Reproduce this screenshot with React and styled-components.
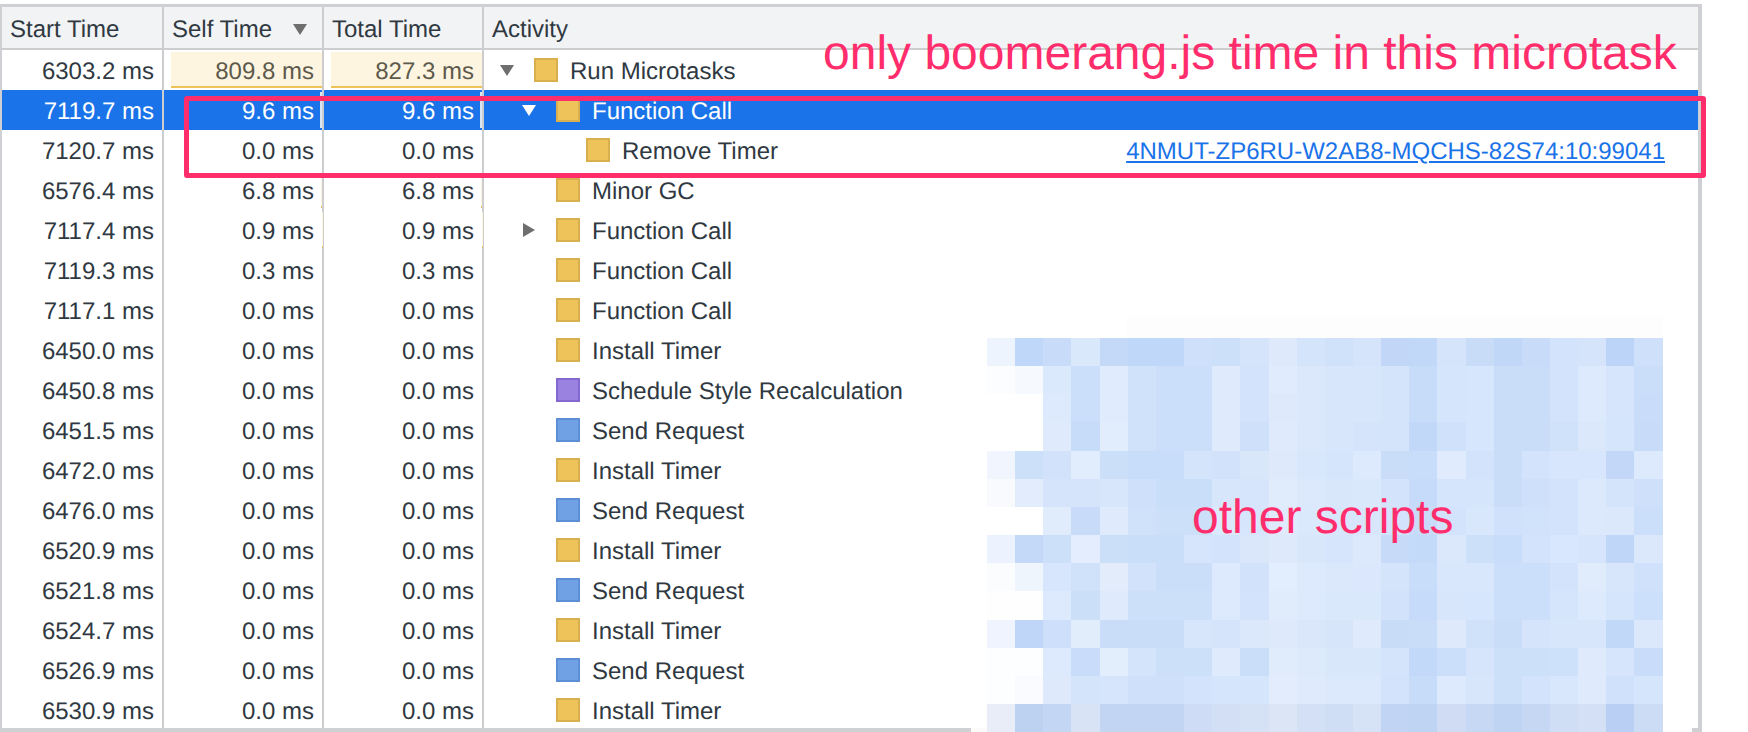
import React from "react";
import styled, { createGlobalStyle } from "styled-components";

const Global = createGlobalStyle`
  html, body { margin: 0; padding: 0; background: #fff; overflow: hidden; }
  #root { width: 1748px; height: 732px; }
  * { box-sizing: border-box; }
`;

const Page = styled.div`
  position: relative;
  width: 1748px;
  height: 732px;
  padding-top: 4px;
  font-family: "Liberation Sans", Arial, sans-serif;
  text-rendering: geometricPrecision;
  overflow: hidden;
`;

const Panel = styled.div`
  width: 1702px;
  height: 728px;
  border: solid #cfd0d3;
  border-width: 3px 4px 4px 2px;
  overflow: hidden;
  background: #fff;
`;

const HeaderRow = styled.div`
  display: grid;
  grid-template-columns: 162px 160px 160px 1fr;
  height: 43px;
  background: #f1f3f4;
  border-bottom: 2px solid #cdcdd0;
  color: #303942;
  font-size: 24px;
`;

const HeaderCell = styled.div`
  display: flex;
  align-items: center;
  padding: 4px 0 0 8px;
  border-right: ${(p) => (p.$last ? "none" : "2px solid #cdcdd0")};
`;

const SortArrow = styled.span`
  width: 0;
  height: 0;
  margin-left: 21px;
  border-left: 7.5px solid transparent;
  border-right: 7.5px solid transparent;
  border-top: 11px solid #6e6e6e;
`;

const TableRow = styled.div`
  display: grid;
  grid-template-columns: 162px 160px 160px 1fr;
  height: 40px;
  font-size: 24px;
  color: ${(p) => (p.$selected ? "#fff" : "#303942")};
  background: ${(p) => (p.$selected ? "#1a73e8" : "#fff")};
`;

const TimeCell = styled.div`
  position: relative;
  display: flex;
  align-items: center;
  justify-content: flex-end;
  padding-right: 8px;
  border-right: 2px solid #cdcdd0;
`;

const TimeText = styled.span`
  position: relative;
  padding-top: 4px;
  color: ${(p) => (p.$dim ? "#5d5a4c" : "inherit")};
`;

const Bar = styled.span`
  position: absolute;
  top: 2px;
  right: 0;
  height: 36px;
  background: ${(p) => (p.$selected ? "#dbe6f5" : "#fdf5e0")};
  border-bottom: 2px solid ${(p) => (p.$selected ? "#dbe6f5" : "#f0c35a")};
`;

const ActivityCell = styled.div`
  display: flex;
  align-items: center;
  min-width: 0;
  padding-left: ${(p) => p.$indent}px;
  padding-right: 33px;
`;

const Twisty = styled.span`
  flex: none;
  display: flex;
  align-items: center;
  justify-content: center;
  width: 15px;
  margin-right: 20px;
  height: 15px;
`;

const TriangleDown = styled.span`
  width: 0;
  height: 0;
  border-left: 7.5px solid transparent;
  border-right: 7.5px solid transparent;
  border-top: 11px solid ${(p) => (p.$selected ? "#fff" : "#6e6e6e")};
`;

const TriangleRight = styled.span`
  width: 0;
  height: 0;
  border-top: 7.5px solid transparent;
  border-bottom: 7.5px solid transparent;
  border-left: 12px solid #6e6e6e;
`;

const Swatch = styled.span`
  flex: none;
  width: 24px;
  height: 24px;
  margin-right: 12px;
  background: ${(p) => p.$fill};
  border: 2px solid ${(p) => p.$edge};
`;

const Name = styled.span`
  padding-top: 4px;
  white-space: nowrap;
`;

const SourceLink = styled.a`
  margin-left: auto;
  padding-top: 4px;
  color: #1a73e8;
  text-decoration: underline;
  white-space: nowrap;
`;

const Note = styled.div`
  position: absolute;
  left: ${(p) => p.$x}px;
  top: ${(p) => p.$y}px;
  color: #ff2d6b;
  font-size: 48px;
  line-height: 56px;
  white-space: nowrap;
`;

const Highlight = styled.div`
  position: absolute;
  left: 184px;
  top: 96px;
  width: 1522px;
  height: 82px;
  border: 5px solid #ff2d6b;
  border-radius: 3px;
`;

const Blur = styled.svg`
  position: absolute;
  left: 971px;
  top: 316px;
  display: block;
`;

const KINDS = {
  y: ["#eec45a", "#d9b04f"],
  p: ["#9a82e0", "#8468d0"],
  b: ["#6fa1e4", "#5d8fd6"],
};

const rows = [
  ["6303.2", "809.8", "827.3", 0, "d", "y", "Run Microtasks"],
  ["7119.7", "9.6", "9.6", 1, "d", "y", "Function Call"],
  ["7120.7", "0.0", "0.0", 2, "", "y", "Remove Timer"],
  ["6576.4", "6.8", "6.8", 1, "", "y", "Minor GC"],
  ["7117.4", "0.9", "0.9", 1, "r", "y", "Function Call"],
  ["7119.3", "0.3", "0.3", 1, "", "y", "Function Call"],
  ["7117.1", "0.0", "0.0", 1, "", "y", "Function Call"],
  ["6450.0", "0.0", "0.0", 1, "", "y", "Install Timer"],
  ["6450.8", "0.0", "0.0", 1, "", "p", "Schedule Style Recalculation"],
  ["6451.5", "0.0", "0.0", 1, "", "b", "Send Request"],
  ["6472.0", "0.0", "0.0", 1, "", "y", "Install Timer"],
  ["6476.0", "0.0", "0.0", 1, "", "b", "Send Request"],
  ["6520.9", "0.0", "0.0", 1, "", "y", "Install Timer"],
  ["6521.8", "0.0", "0.0", 1, "", "b", "Send Request"],
  ["6524.7", "0.0", "0.0", 1, "", "y", "Install Timer"],
  ["6526.9", "0.0", "0.0", 1, "", "b", "Send Request"],
  ["6530.9", "0.0", "0.0", 1, "", "y", "Install Timer"],
];

const INDENT = [15, 37, 67];
const SELF_MAX = 809.8;
const TOTAL_MAX = 827.3;
const BAR_FULL = 151.5;

const mosaic = [
  "eef4fe bfd7f8 c8dcf9 dae8fc c4d9f8 bfd7f8 bfd7f8 cfe1fa cde0fa d5e4fb deeafc d4e4fb d0e2fa d5e4fb c2d6f7 c2d8f8 d5e4fb c8dcf8 c0d7f8 c8dcf9 d2e3fb d5e4fb bcd4f8 cfe0fb",
  "fcfdff f6f9fe dbe9fc cbdffa e0ecfd d0e2fa cbdffa cbdffa dfebfd d2e3fb e0ecfd dbe8fc d8e6fc d8e6fc d3e4fb c6dcf9 d5e5fc d6e6fc c9ddf9 c9ddf9 d2e3fb dde9fc d6e5fb cadefa",
  "ffffff ffffff dde9fc cbdffa e0ecfd d0e2fa cbdffa cbdffa dfebfd d2e3fb deeafc dbe8fc d8e6fc d8e6fc d3e4fb c6dcf9 d5e5fc d6e6fc c9ddf9 c9ddf9 d2e3fb dde9fc d6e5fb c9ddfa",
  "ffffff ffffff dfebfd c7dcf9 e1edfd d0e2fa cbdffa cbdffa dfebfd cfe1fa dfebfc dbe8fc d8e6fc d5e4fb d3e4fb c1d8f8 d0e2fb d6e6fc c9ddf9 c9ddf9 d0e1fa dbe8fc d5e5fb c8dcfa",
  "f1f5fe cce0fa d2e2fb e1ecfd cbdff9 c8ddf9 c8ddf9 d4e4fb d1e2fa d9e7fb deeafc d9e7fc d5e5fb dde9fc c9dcf8 c8ddf9 e0ebfd d2e3fb c9ddf9 d2e3fb d7e6fc d7e6fc c3d8f8 dde9fc",
  "f8fafe e2ecfc d5e4fb d5e4fb d8e6fb cfe1fa c9def9 c9def9 d8e6fc d6e5fb e0ebfc dce9fc d9e7fb dae8fc d3e3fb c5dbf9 d5e5fb d5e5fb c9ddf9 cfe1fa d3e3fb dce9fc d3e4fb cee0fa",
  "ffffff ffffff e0ebfc c8dcf9 dfebfc d0e2fa cde0fa cde0fa dbe9fc d6e5fb dfeafc dbe9fc d8e6fc d8e6fc d2e3fb c8dcf9 d2e3fb d8e7fc cfe1fb d1e3fb d3e3fb dce9fc dbe8fc ccdffa",
  "edf3fe c4d9f8 cde0fa e3edfe cbdff9 c9def9 c9def9 d6e5fb d2e3fb dae7fb deeafc d9e7fb d6e5fb dce8fc c7dbf8 c4daf9 dbe8fb cce0f9 c8ddf9 d3e3fb d8e7fd d6e5fc bfd6f8 dbe8fc",
  "fbfcfe eff5fc d7e6fc d0e1fa e2ecfb d1e2fa cadef9 cadef9 dde9fc d2e2fb e2edfd dde9fc dbe8fc dae7fc d4e4fb c8ddf9 d8e7fc d8e7fc cbdffa cbdffa d2e3fb e0ebfc d8e6fc cfe1fb",
  "fefefe fefefe dde9fc ccdff9 dfebfc cde0fa cde0fa cde0fa dde9fc d2e3fb e0ebfc dde9fc dae8fc dae8fc d1e2fa c5dbf9 d8e6fc d6e6fc cbdffa cbdffa d5e5fb dde9fc d5e5fb ccdffb",
  "eff4fe bfd6f9 cddffa e2edfc c9ddf9 c9ddf9 c9ddf9 d8e6fc d5e4fb dbe8fb deeafc dae7fb d7e5fb dfebfc c8dcf8 c9ddf9 deeafc cfe2f9 c9ddf9 d5e4fb d8e6fc d8e6fc c1d8f8 dbe8fc",
  "fdfeff fdfeff dde9fc c9dcfa e3eefd d3e4fb cce0f9 cce0f9 dfebfd cadef9 e0ebfc ddeafc d9e7fb d9e7fb d4e4fb c3d9f9 ccdffa d6e5fc cce0f9 cce0fa cee1fb dfebfd d6e5fb c9ddfb",
  "fdfeff f9fbfe deeafc d4e4fb d6e5fb cee0fa cfe1fa d3e3fb d5e5fb d5e5fb e2ecfd dfeafc dce9fc dce9fc d2e3fb c7dcf9 dde9fc d8e6fc cce0f9 d2e3fb d8e7fc dfeafd d0e1fb d5e5fc",
  "e8edf8 bdd1f1 c3d6f4 d8e3f5 c2d5f3 c2d5f3 c2d5f3 cedcf6 d2dff5 d5e1f5 dbe5f6 d4e0f5 d0def5 d6e2f6 c1d4f4 bfd3f3 cfdcf4 c6d8f3 bfd3f3 c5d7f3 cfdef5 d3e0f5 b9cff3 cddcf5",
].map((r) => r.split(" "));

const CELL = 28.15;
const OX = 16;
const OY = 22;

function Mosaic() {
  return (
    <Blur width="721" height="416" viewBox="0 0 721 416" shapeRendering="crispEdges">
      <rect x="0" y="0" width="721" height="416" fill="#fff" />
      <rect x="156" y="1" width="536" height="21" fill="#fdfdfe" />
      <rect x="0" y="412" width="16" height="4" fill="#fdfbf9" />
      {mosaic.map((row, y) =>
        row.map((c, x) => (
          <rect
            key={`${x}-${y}`}
            x={OX + x * CELL}
            y={OY + y * CELL}
            width={CELL + 0.5}
            height={CELL + 0.5}
            fill={`#${c}`}
          />
        ))
      )}
    </Blur>
  );
}

export default function App() {
  return (
    <Page>
      <Global />
      <Panel>
        <HeaderRow>
          <HeaderCell>Start Time</HeaderCell>
          <HeaderCell>
            Self Time
            <SortArrow />
          </HeaderCell>
          <HeaderCell>Total Time</HeaderCell>
          <HeaderCell $last>Activity</HeaderCell>
        </HeaderRow>
        {rows.map(([start, self, total, level, twisty, kind, name], i) => {
          const selected = i === 1;
          const first = i === 0;
          return (
            <TableRow key={i} $selected={selected}>
              <TimeCell>
                <TimeText>{start} ms</TimeText>
              </TimeCell>
              <TimeCell>
                {Number(self) > 0 && (
                  <Bar
                    $selected={selected}
                    style={{ width: `${(Number(self) / SELF_MAX) * BAR_FULL}px` }}
                  />
                )}
                <TimeText $dim={first}>{self} ms</TimeText>
              </TimeCell>
              <TimeCell>
                {Number(total) > 0 && (
                  <Bar
                    $selected={selected}
                    style={{ width: `${(Number(total) / TOTAL_MAX) * BAR_FULL}px` }}
                  />
                )}
                <TimeText $dim={first}>{total} ms</TimeText>
              </TimeCell>
              <ActivityCell $indent={INDENT[level]}>
                <Twisty>
                  {twisty === "d" && <TriangleDown $selected={selected} />}
                  {twisty === "r" && <TriangleRight />}
                </Twisty>
                <Swatch $fill={KINDS[kind][0]} $edge={KINDS[kind][1]} />
                <Name>{name}</Name>
                {i === 2 && (
                  <SourceLink href="#">4NMUT-ZP6RU-W2AB8-MQCHS-82S74:10:99041</SourceLink>
                )}
              </ActivityCell>
            </TableRow>
          );
        })}
      </Panel>
      <Mosaic />
      <Note $x={823} $y={26}>only boomerang.js time in this microtask</Note>
      <Highlight />
      <Note $x={1192} $y={490}>other scripts</Note>
    </Page>
  );
}
